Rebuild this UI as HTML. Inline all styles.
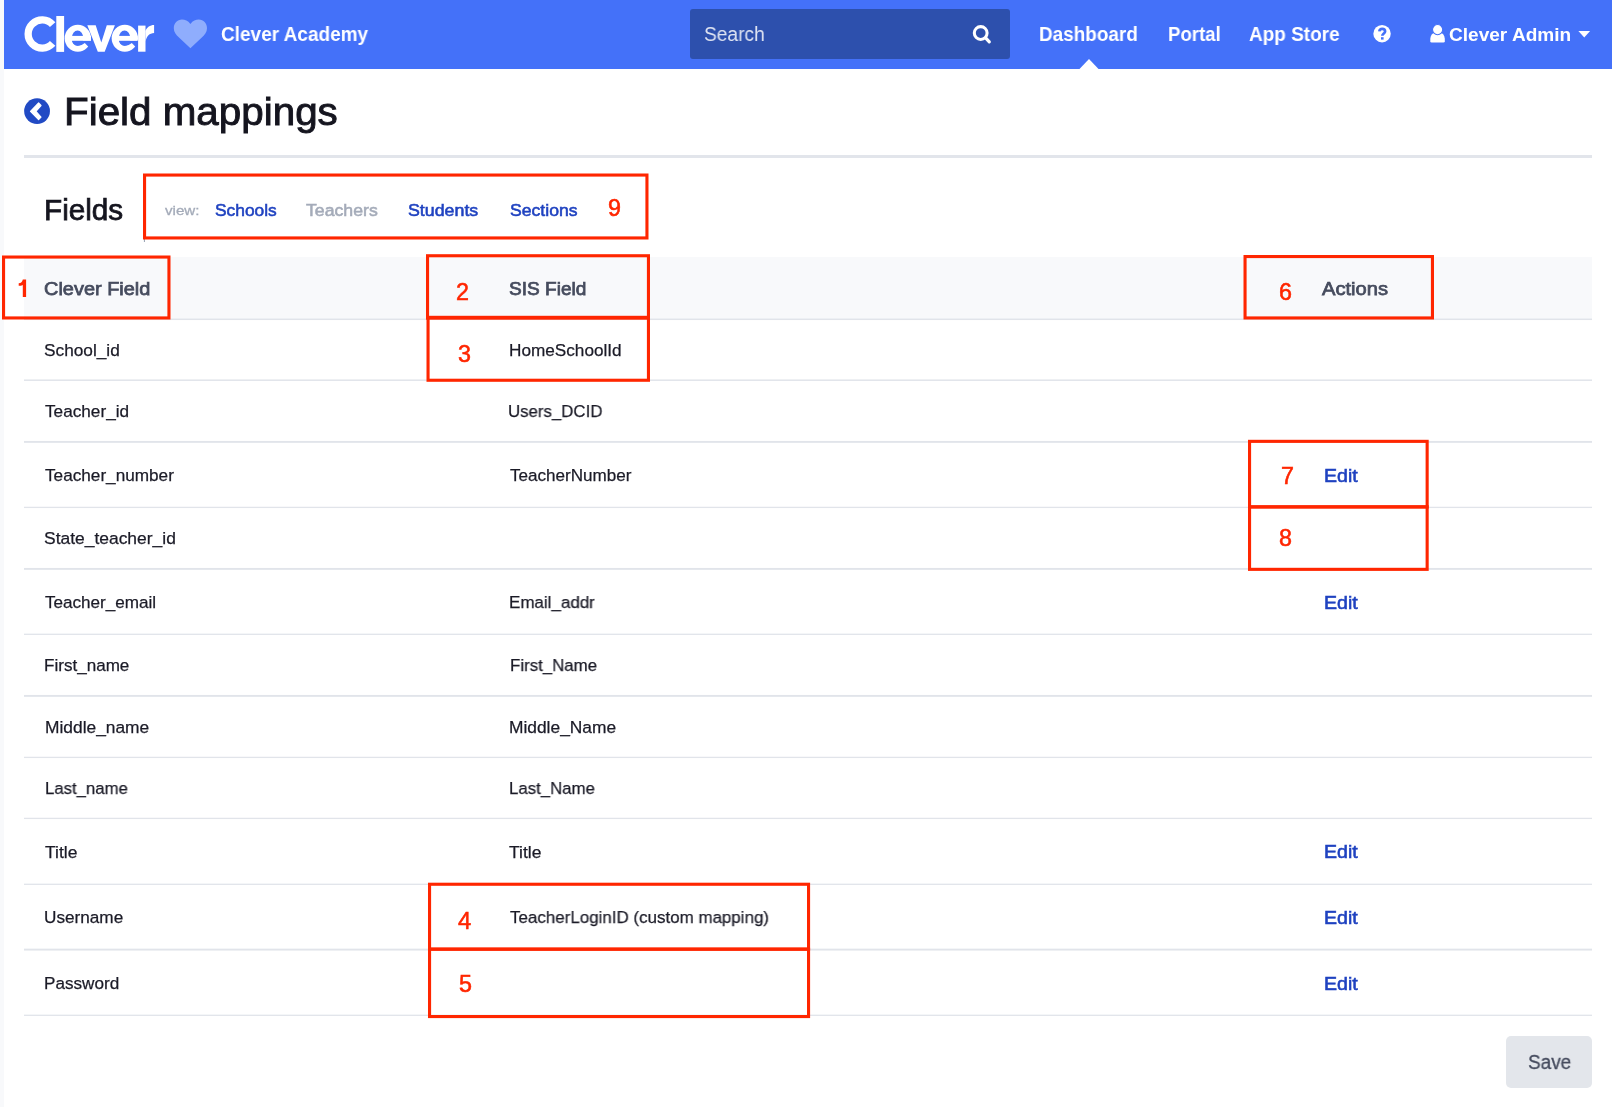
<!DOCTYPE html>
<html><head><meta charset="utf-8">
<style>
html,body{margin:0;padding:0;width:1612px;height:1107px;overflow:hidden;background:#ffffff;font-family:"Liberation Sans",sans-serif;}
.t{position:absolute;white-space:nowrap;transform-origin:0 0;will-change:transform;}
.r{position:absolute;}
svg{position:absolute;left:0;top:0;}
</style></head><body>
<div class="r" style="left:0;top:0;width:4px;height:1107px;background:#f8f9fb"></div>
<div class="r" style="left:4px;top:0;width:1608px;height:69px;background:#4471f9"></div>
<div class="r" style="left:690px;top:9px;width:320px;height:50px;background:#2d50ad;border-radius:3px"></div>
<div class="r" style="left:24px;top:257px;width:1568px;height:62px;background:#f8f9fb"></div>
<div class="r" style="left:1506px;top:1036px;width:86px;height:51.5px;background:#e3e6eb;border-radius:5px"></div>
<svg width="1612" height="1107" viewBox="0 0 1612 1107">
  <!-- nav indicator -->
  <polygon points="1079,69.5 1089,59 1099,69.5" fill="#ffffff"/>
  <!-- logo -->
  <g fill="#ffffff">
    <path d="M52.64,24.60 A14.05,14.05 0 1 0 52.64,43.40" fill="none" stroke="#ffffff" stroke-width="7.3"/>
    <rect x="56.3" y="16" width="7.8" height="35.9"/>
    <g id="e1">
      <ellipse cx="77.8" cy="38.2" rx="13.15" ry="13.5"/>
      <ellipse cx="77.55" cy="38.2" rx="5.75" ry="7.6" fill="#4471f9"/>
      <path d="M71.9,40.6 C72.4,43.6 74.7,45.8 77.6,45.8 C80.6,45.8 82.9,44.6 84.8,43.1 L91.5,50.0 L91.5,40.6 Z" fill="#4471f9"/>
      <rect x="70" y="35.9" width="21" height="4.9"/>
    </g>
    <polygon points="87.3,25.2 95.7,25.2 101.3,42.4 106.8,25.2 114.9,25.2 104.7,51.7 97.8,51.7"/>
    <g transform="translate(47.0,0)">
      <ellipse cx="77.8" cy="38.2" rx="13.15" ry="13.5"/>
      <ellipse cx="77.55" cy="38.2" rx="5.75" ry="7.6" fill="#4471f9"/>
      <path d="M71.9,40.6 C72.4,43.6 74.7,45.8 77.6,45.8 C80.6,45.8 82.9,44.6 84.8,43.1 L91.5,50.0 L91.5,40.6 Z" fill="#4471f9"/>
      <rect x="70" y="35.9" width="20.5" height="4.9"/>
    </g>
    <rect x="138.1" y="25.6" width="7.4" height="26.1"/>
    <path d="M145.3,31.1 C147,27.3 150,25 154.1,25 L154.1,32.9 C149.5,33.1 146.5,36 145.6,41.5 Z"/>
  </g>
  <!-- heart -->
  <path d="M190.4,23.9 C188,20.8 185,19.6 182,19.6 C177.3,19.6 173.8,23.3 173.8,28.2 C173.8,32 176,34.8 179,37.6 L190.4,48.3 L201.8,37.6 C204.8,34.8 207,32 207,28.2 C207,23.3 203.5,19.6 198.8,19.6 C195.8,19.6 192.8,20.8 190.4,23.9 Z" fill="#8fadfd"/>
  <!-- search icon -->
  <circle cx="980.7" cy="33" r="6.4" fill="none" stroke="#ffffff" stroke-width="3.05"/>
  <line x1="985.6" y1="37.9" x2="989.3" y2="41.9" stroke="#ffffff" stroke-width="3.2" stroke-linecap="round"/>
  <!-- help icon -->
  <circle cx="1382.05" cy="33.7" r="8.7" fill="#ffffff"/>
  <path d="M1379.3,31.4 C1379.6,29.6 1380.8,28.9 1382.2,28.9 C1383.9,28.9 1385.1,30 1385.1,31.4 C1385.1,33.4 1382.3,33.6 1382.3,35.8" fill="none" stroke="#4471f9" stroke-width="2.7"/>
  <rect x="1381.0" y="37.2" width="2.6" height="2.4" fill="#4471f9"/>
  <!-- user icon -->
  <path d="M1430.3,41.2 L1430.3,38.8 C1430.5,35.4 1432.3,33.1 1435,32.8 L1440.1,32.8 C1442.8,33.1 1444.6,35.4 1444.8,38.8 L1444.8,41.2 Q1444.8,42.6 1443.4,42.6 L1431.7,42.6 Q1430.3,42.6 1430.3,41.2 Z" fill="#ffffff"/>
  <circle cx="1437.6" cy="29.6" r="5.1" fill="#ffffff" stroke="#4471f9" stroke-width="1.1"/>
  <!-- caret -->
  <polygon points="1578.4,31.1 1590.1,31.1 1584.25,37.5" fill="#ffffff"/>
  <!-- back icon -->
  <circle cx="37.05" cy="111.1" r="12.9" fill="#214ac4"/>
  <polygon points="30.5,111.35 38.6,103.0 41.0,105.5 35.9,111.35 41.0,117.2 38.6,119.6" fill="#ffffff" stroke="#ffffff" stroke-width="1.2" stroke-linejoin="round"/>
  <rect x="143.9" y="238" width="1.1" height="4" fill="#9ea8b7"/>
  <!-- separator -->
  <rect x="24" y="155" width="1568" height="3" fill="#e2e5eb"/>
  <!-- row lines -->
  <g fill="#e1e4ea">
    <rect x="24" y="318.55" width="1568" height="1.5"/>
    <rect x="24" y="379.45" width="1568" height="1.5"/>
    <rect x="24" y="440.95" width="1568" height="1.9"/>
    <rect x="24" y="506.75" width="1568" height="1.3"/>
    <rect x="24" y="567.95" width="1568" height="1.9"/>
    <rect x="24" y="633.65" width="1568" height="1.3"/>
    <rect x="24" y="694.95" width="1568" height="1.9"/>
    <rect x="24" y="756.75" width="1568" height="1.3"/>
    <rect x="24" y="817.75" width="1568" height="1.3"/>
    <rect x="24" y="883.65" width="1568" height="1.3"/>
    <rect x="24" y="948.65" width="1568" height="1.9"/>
    <rect x="24" y="1014.65" width="1568" height="1.3"/>
  </g>
</svg>
<div class="t" style="left:221.37px;top:25.00px;font-size:19.49px;line-height:19.49px;font-weight:700;color:#ffffff;transform:scaleX(0.9748);">Clever Academy</div>
<div class="t" style="left:704.34px;top:25.00px;font-size:19.91px;line-height:19.91px;font-weight:400;color:#dfe4f2;transform:scaleX(0.9630);">Search</div>
<div class="t" style="left:1039.18px;top:25.00px;font-size:19.77px;line-height:19.77px;font-weight:700;color:#ffffff;transform:scaleX(0.9568);">Dashboard</div>
<div class="t" style="left:1167.98px;top:25.00px;font-size:19.77px;line-height:19.77px;font-weight:700;color:#ffffff;transform:scaleX(0.9408);">Portal</div>
<div class="t" style="left:1249.06px;top:25.00px;font-size:19.77px;line-height:19.77px;font-weight:700;color:#ffffff;transform:scaleX(0.9592);">App Store</div>
<div class="t" style="left:1449.12px;top:26.00px;font-size:18.92px;line-height:18.92px;font-weight:700;color:#ffffff;transform:scaleX(1.0083);">Clever Admin</div>
<div class="t" style="left:63.89px;top:93.00px;font-size:38.41px;line-height:38.41px;font-weight:400;color:#15151f;transform:scaleX(1.0512);-webkit-text-stroke:0.9px #15151f;">Field mappings</div>
<div class="t" style="left:44.34px;top:196.01px;font-size:29.16px;line-height:29.16px;font-weight:400;color:#15151f;transform:scaleX(1.0185);-webkit-text-stroke:0.75px #15151f;">Fields</div>
<div class="t" style="left:165.35px;top:204.01px;font-size:13.60px;line-height:13.60px;font-weight:400;color:#a4abb9;transform:scaleX(1.1142);-webkit-text-stroke:0.3px #a4abb9;">view:</div>
<div class="t" style="left:214.68px;top:203.01px;font-size:16.64px;line-height:16.64px;font-weight:400;color:#1f42c0;transform:scaleX(1.0435);-webkit-text-stroke:0.55px #1f42c0;">Schools</div>
<div class="t" style="left:305.97px;top:203.01px;font-size:16.64px;line-height:16.64px;font-weight:400;color:#a4abb9;transform:scaleX(1.0637);-webkit-text-stroke:0.55px #a4abb9;">Teachers</div>
<div class="t" style="left:408.13px;top:203.01px;font-size:16.64px;line-height:16.64px;font-weight:400;color:#1f42c0;transform:scaleX(1.0701);-webkit-text-stroke:0.55px #1f42c0;">Students</div>
<div class="t" style="left:510.14px;top:203.01px;font-size:16.64px;line-height:16.64px;font-weight:400;color:#1f42c0;transform:scaleX(1.0589);-webkit-text-stroke:0.55px #1f42c0;">Sections</div>
<div class="t" style="left:44.48px;top:280.00px;font-size:18.49px;line-height:18.49px;font-weight:400;color:#464c5e;transform:scaleX(1.0784);-webkit-text-stroke:0.75px #464c5e;">Clever Field</div>
<div class="t" style="left:508.88px;top:280.00px;font-size:18.49px;line-height:18.49px;font-weight:400;color:#464c5e;transform:scaleX(1.0314);-webkit-text-stroke:0.75px #464c5e;">SIS Field</div>
<div class="t" style="left:1322.31px;top:280.00px;font-size:18.49px;line-height:18.49px;font-weight:400;color:#464c5e;transform:scaleX(1.0891);-webkit-text-stroke:0.75px #464c5e;">Actions</div>
<div class="t" style="left:455.61px;top:281.01px;font-size:23.30px;line-height:23.30px;font-weight:400;color:#ff2600;-webkit-text-stroke:0.55px #ff2600;">2</div>
<div class="t" style="left:457.64px;top:343.00px;font-size:23.30px;line-height:23.30px;font-weight:400;color:#ff2600;-webkit-text-stroke:0.55px #ff2600;">3</div>
<div class="t" style="left:457.79px;top:910.00px;font-size:23.30px;line-height:23.30px;font-weight:400;color:#ff2600;transform:scaleX(1.0193);-webkit-text-stroke:0.55px #ff2600;">4</div>
<div class="t" style="left:459.33px;top:973.00px;font-size:23.30px;line-height:23.30px;font-weight:400;color:#ff2600;-webkit-text-stroke:0.55px #ff2600;">5</div>
<div class="t" style="left:1279.40px;top:281.01px;font-size:23.30px;line-height:23.30px;font-weight:400;color:#ff2600;-webkit-text-stroke:0.55px #ff2600;">6</div>
<div class="t" style="left:1281.47px;top:465.00px;font-size:23.30px;line-height:23.30px;font-weight:400;color:#ff2600;-webkit-text-stroke:0.55px #ff2600;">7</div>
<div class="t" style="left:1279.11px;top:527.01px;font-size:23.30px;line-height:23.30px;font-weight:400;color:#ff2600;-webkit-text-stroke:0.55px #ff2600;">8</div>
<div class="t" style="left:607.57px;top:197.00px;font-size:23.30px;line-height:23.30px;font-weight:400;color:#ff2600;-webkit-text-stroke:0.55px #ff2600;">9</div>
<div class="t" style="left:44.07px;top:342.01px;font-size:17.07px;line-height:17.07px;font-weight:400;color:#1b1b27;transform:scaleX(1.0113);-webkit-text-stroke:0.25px #1b1b27;">School_id</div>
<div class="t" style="left:508.90px;top:342.01px;font-size:17.07px;line-height:17.07px;font-weight:400;color:#1b1b27;transform:scaleX(1.0063);-webkit-text-stroke:0.25px #1b1b27;">HomeSchoolId</div>
<div class="t" style="left:44.83px;top:403.01px;font-size:17.07px;line-height:17.07px;font-weight:400;color:#1b1b27;transform:scaleX(1.0071);-webkit-text-stroke:0.25px #1b1b27;">Teacher_id</div>
<div class="t" style="left:508.10px;top:403.01px;font-size:17.07px;line-height:17.07px;font-weight:400;color:#1b1b27;transform:scaleX(0.9861);-webkit-text-stroke:0.25px #1b1b27;">Users_DCID</div>
<div class="t" style="left:44.83px;top:467.00px;font-size:17.07px;line-height:17.07px;font-weight:400;color:#1b1b27;transform:scaleX(1.0066);-webkit-text-stroke:0.25px #1b1b27;">Teacher_number</div>
<div class="t" style="left:510.10px;top:467.00px;font-size:17.07px;line-height:17.07px;font-weight:400;color:#1b1b27;-webkit-text-stroke:0.25px #1b1b27;">TeacherNumber</div>
<div class="t" style="left:1324.08px;top:467.01px;font-size:18.92px;line-height:18.92px;font-weight:400;color:#1f42c0;transform:scaleX(1.0348);-webkit-text-stroke:0.6px #1f42c0;">Edit</div>
<div class="t" style="left:44.07px;top:530.00px;font-size:17.07px;line-height:17.07px;font-weight:400;color:#1b1b27;transform:scaleX(1.0220);-webkit-text-stroke:0.25px #1b1b27;">State_teacher_id</div>
<div class="t" style="left:44.83px;top:594.00px;font-size:17.07px;line-height:17.07px;font-weight:400;color:#1b1b27;transform:scaleX(1.0016);-webkit-text-stroke:0.25px #1b1b27;">Teacher_email</div>
<div class="t" style="left:508.76px;top:594.00px;font-size:17.07px;line-height:17.07px;font-weight:400;color:#1b1b27;transform:scaleX(0.9939);-webkit-text-stroke:0.25px #1b1b27;">Email_addr</div>
<div class="t" style="left:1324.08px;top:594.01px;font-size:18.92px;line-height:18.92px;font-weight:400;color:#1f42c0;transform:scaleX(1.0348);-webkit-text-stroke:0.6px #1f42c0;">Edit</div>
<div class="t" style="left:43.86px;top:657.00px;font-size:17.07px;line-height:17.07px;font-weight:400;color:#1b1b27;transform:scaleX(0.9974);-webkit-text-stroke:0.25px #1b1b27;">First_name</div>
<div class="t" style="left:509.77px;top:657.00px;font-size:17.07px;line-height:17.07px;font-weight:400;color:#1b1b27;transform:scaleX(0.9864);-webkit-text-stroke:0.25px #1b1b27;">First_Name</div>
<div class="t" style="left:44.72px;top:719.00px;font-size:17.07px;line-height:17.07px;font-weight:400;color:#1b1b27;transform:scaleX(1.0175);-webkit-text-stroke:0.25px #1b1b27;">Middle_name</div>
<div class="t" style="left:508.86px;top:719.00px;font-size:17.07px;line-height:17.07px;font-weight:400;color:#1b1b27;transform:scaleX(1.0173);-webkit-text-stroke:0.25px #1b1b27;">Middle_Name</div>
<div class="t" style="left:44.52px;top:780.00px;font-size:17.07px;line-height:17.07px;font-weight:400;color:#1b1b27;transform:scaleX(0.9807);-webkit-text-stroke:0.25px #1b1b27;">Last_name</div>
<div class="t" style="left:508.83px;top:780.00px;font-size:17.07px;line-height:17.07px;font-weight:400;color:#1b1b27;transform:scaleX(0.9844);-webkit-text-stroke:0.25px #1b1b27;">Last_Name</div>
<div class="t" style="left:44.83px;top:844.00px;font-size:17.07px;line-height:17.07px;font-weight:400;color:#1b1b27;transform:scaleX(1.0239);-webkit-text-stroke:0.25px #1b1b27;">Title</div>
<div class="t" style="left:509.23px;top:844.00px;font-size:17.07px;line-height:17.07px;font-weight:400;color:#1b1b27;transform:scaleX(1.0239);-webkit-text-stroke:0.25px #1b1b27;">Title</div>
<div class="t" style="left:1324.08px;top:843.01px;font-size:18.92px;line-height:18.92px;font-weight:400;color:#1f42c0;transform:scaleX(1.0348);-webkit-text-stroke:0.6px #1f42c0;">Edit</div>
<div class="t" style="left:43.69px;top:909.01px;font-size:17.07px;line-height:17.07px;font-weight:400;color:#1b1b27;transform:scaleX(1.0064);-webkit-text-stroke:0.25px #1b1b27;">Username</div>
<div class="t" style="left:509.92px;top:909.01px;font-size:17.07px;line-height:17.07px;font-weight:400;color:#1b1b27;transform:scaleX(0.9932);-webkit-text-stroke:0.25px #1b1b27;">TeacherLoginID (custom mapping)</div>
<div class="t" style="left:1324.08px;top:909.00px;font-size:18.92px;line-height:18.92px;font-weight:400;color:#1f42c0;transform:scaleX(1.0348);-webkit-text-stroke:0.6px #1f42c0;">Edit</div>
<div class="t" style="left:43.87px;top:975.01px;font-size:17.07px;line-height:17.07px;font-weight:400;color:#1b1b27;transform:scaleX(1.0034);-webkit-text-stroke:0.25px #1b1b27;">Password</div>
<div class="t" style="left:1324.08px;top:975.00px;font-size:18.92px;line-height:18.92px;font-weight:400;color:#1f42c0;transform:scaleX(1.0348);-webkit-text-stroke:0.6px #1f42c0;">Edit</div>
<div class="t" style="left:1527.71px;top:1053.00px;font-size:19.77px;line-height:19.77px;font-weight:400;color:#464c5e;transform:scaleX(0.9583);-webkit-text-stroke:0.3px #464c5e;">Save</div>
<svg width="1612" height="1107" viewBox="0 0 1612 1107">
  <path d="M22.8,279.6 L26.1,279.6 L26.1,297 L22.8,297 L22.8,284.9 C21.7,285.5 20.3,285.8 18.7,285.8 L18.7,283.3 C20.9,283.2 22.4,282.0 22.8,279.6 Z" fill="#ff2600"/>
  <g fill="none" stroke="#ff2600" stroke-width="3.1" stroke-linejoin="miter">
    <rect x="144.55" y="175.05" width="502.40" height="62.90"/>
    <rect x="3.55" y="257.05" width="165.40" height="60.90"/>
    <rect x="427.55" y="255.75" width="220.90" height="62.40"/>
    <rect x="428.05" y="317.35" width="220.40" height="62.90"/>
    <rect x="1245.05" y="256.55" width="187.40" height="61.40"/>
    <rect x="1249.55" y="441.35" width="177.60" height="65.70"/>
    <rect x="1249.55" y="506.75" width="177.60" height="62.60"/>
    <rect x="429.55" y="884.25" width="379.00" height="64.80"/>
    <rect x="429.55" y="949.25" width="379.00" height="67.30"/>
  </g>
</svg>
</body></html>
